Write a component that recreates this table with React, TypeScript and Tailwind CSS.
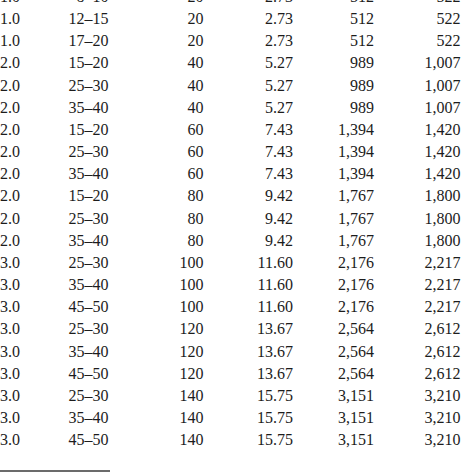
const rows: string[][] = [
  ['1.0', '8–10', '20', '2.73', '512', '522'],
  ['1.0', '12–15', '20', '2.73', '512', '522'],
  ['1.0', '17–20', '20', '2.73', '512', '522'],
  ['2.0', '15–20', '40', '5.27', '989', '1,007'],
  ['2.0', '25–30', '40', '5.27', '989', '1,007'],
  ['2.0', '35–40', '40', '5.27', '989', '1,007'],
  ['2.0', '15–20', '60', '7.43', '1,394', '1,420'],
  ['2.0', '25–30', '60', '7.43', '1,394', '1,420'],
  ['2.0', '35–40', '60', '7.43', '1,394', '1,420'],
  ['2.0', '15–20', '80', '9.42', '1,767', '1,800'],
  ['2.0', '25–30', '80', '9.42', '1,767', '1,800'],
  ['2.0', '35–40', '80', '9.42', '1,767', '1,800'],
  ['3.0', '25–30', '100', '11.60', '2,176', '2,217'],
  ['3.0', '35–40', '100', '11.60', '2,176', '2,217'],
  ['3.0', '45–50', '100', '11.60', '2,176', '2,217'],
  ['3.0', '25–30', '120', '13.67', '2,564', '2,612'],
  ['3.0', '35–40', '120', '13.67', '2,564', '2,612'],
  ['3.0', '45–50', '120', '13.67', '2,564', '2,612'],
  ['3.0', '25–30', '140', '15.75', '3,151', '3,210'],
  ['3.0', '35–40', '140', '15.75', '3,151', '3,210'],
  ['3.0', '45–50', '140', '15.75', '3,151', '3,210'],
]

export default function App() {
  return (
    <div className="h-[474px] w-[474px] overflow-hidden bg-white text-[#1c1c1c] font-['Liberation_Serif','Times_New_Roman',serif] text-[16px] leading-[22.16px]">
      <div className="-mt-[14px]">
        {rows.map((r, i) => (
          <div key={i} className="grid grid-cols-[60px_48.5px_95px_89.5px_81px_86.5px] h-[22.16px]">
            <span className="text-left">{r[0]}</span>
            <span className="text-right">{r[1]}</span>
            <span className="text-right">{r[2]}</span>
            <span className="text-right">{r[3]}</span>
            <span className="text-right">{r[4]}</span>
            <span className="text-right">{r[5]}</span>
          </div>
        ))}
      </div>
      <div className="mt-[18.6px] h-[2px] w-[110px] bg-[#6b6b6b]" />
    </div>
  )
}
